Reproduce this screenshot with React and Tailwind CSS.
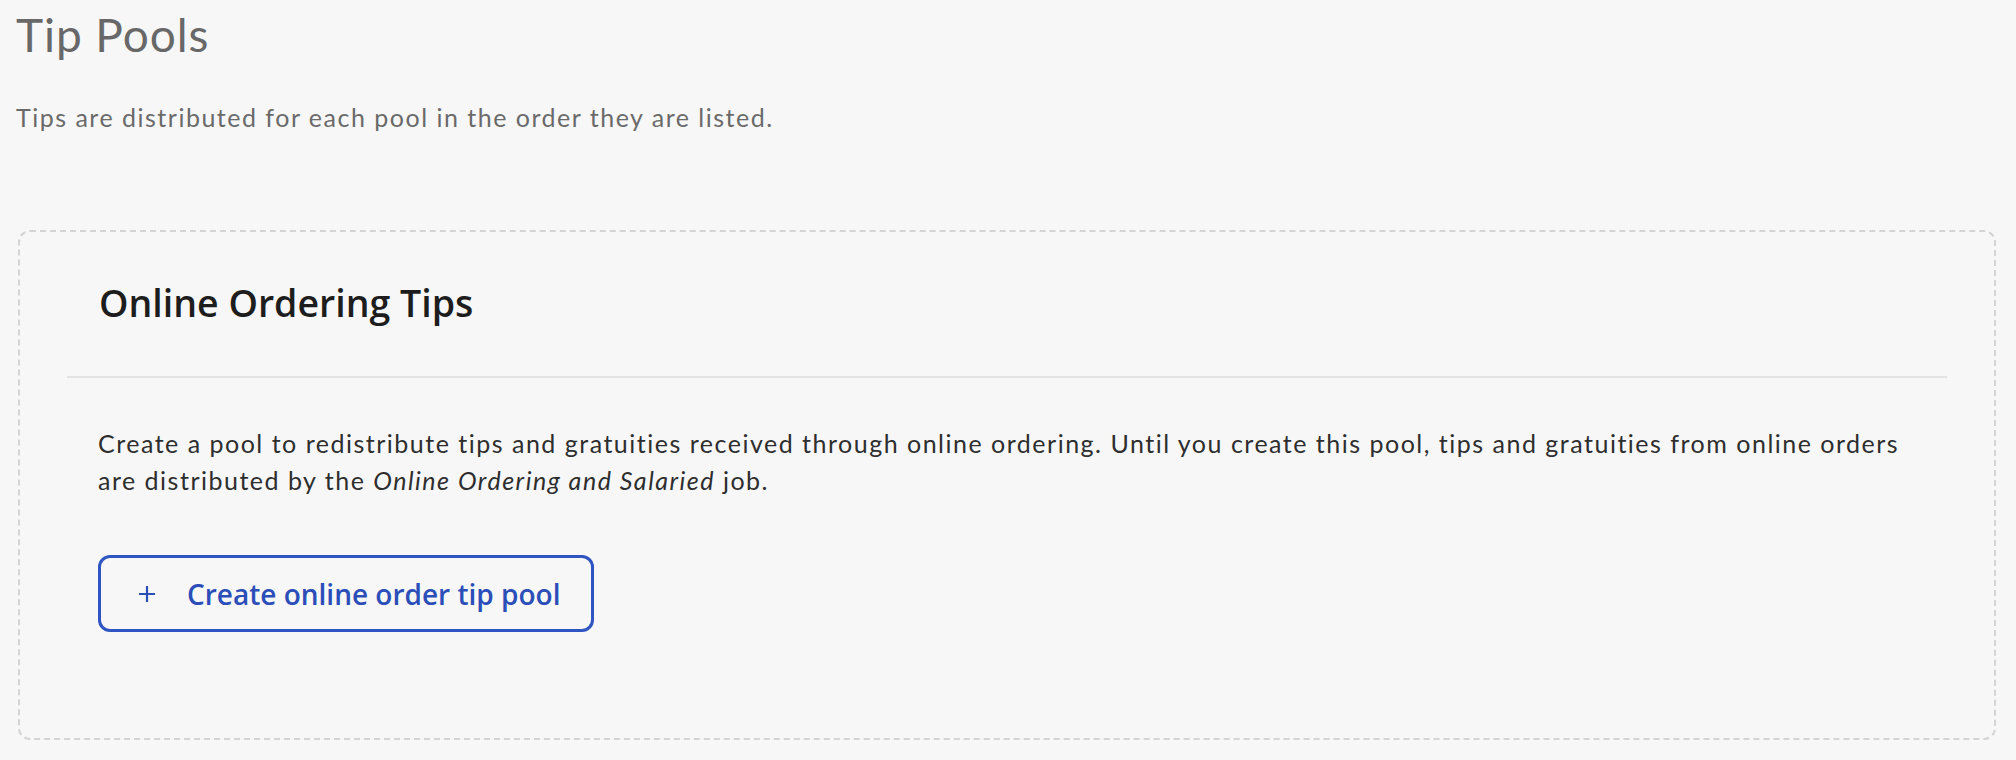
import React from 'react'

const PlusIcon = () => (
  <svg width="18" height="18" viewBox="0 0 18 18" fill="none" stroke="currentColor" strokeWidth="2.2" strokeLinecap="butt">
    <path d="M9 1v16M1 9h16" />
  </svg>
)

const TipPools = () => {
  return (
    <div className="min-h-screen bg-[#f7f7f7] px-4 pt-[7px] pb-5 font-['Lato',sans-serif]">
      <h1 className="text-[46px] leading-[56px] font-normal tracking-[0.02em] text-[#686868]">Tip Pools</h1>
      <p className="mt-[36px] text-[25px] leading-[36px] tracking-[0.06em] text-[#6a6a6a]">
        Tips are distributed for each pool in the order they are listed.
      </p>

      {/* Online ordering pool */}
      <section className="mt-[95px] ml-[2px] mr-[4px] rounded-xl border-2 border-dashed border-[#d4d4d4] px-[47px] pt-[49px] pb-[106px]">
        <div className="pl-8 pb-[51px] border-b-2 border-[#e3e3e3]">
          <h2 className="font-['Open_Sans',sans-serif] text-[37.5px] leading-[44px] font-semibold text-[#1d1d1d]">
            Online Ordering Tips
          </h2>
        </div>
        <div className="pl-[31px] pt-[47px]">
          <p className="text-[25px] leading-[37px] tracking-[0.06em] text-[#2e2e2e]">
            Create a pool to redistribute tips and gratuities received through online ordering. Until you create this pool, tips and gratuities from online orders
            <br />
            are distributed by the <em>Online Ordering and Salaried</em> job.
          </p>
          <button
            type="button"
            className="mt-[56px] flex h-[77px] w-[496px] items-center rounded-xl border-[3px] border-[#2f55c2] pl-[37px] text-[#2b4eb8] font-['Open_Sans',sans-serif] text-[28px] font-semibold"
          >
            <PlusIcon />
            <span className="ml-[31px]">Create online order tip pool</span>
          </button>
        </div>
      </section>
    </div>
  )
}

export default function App() {
  return <TipPools />
}
